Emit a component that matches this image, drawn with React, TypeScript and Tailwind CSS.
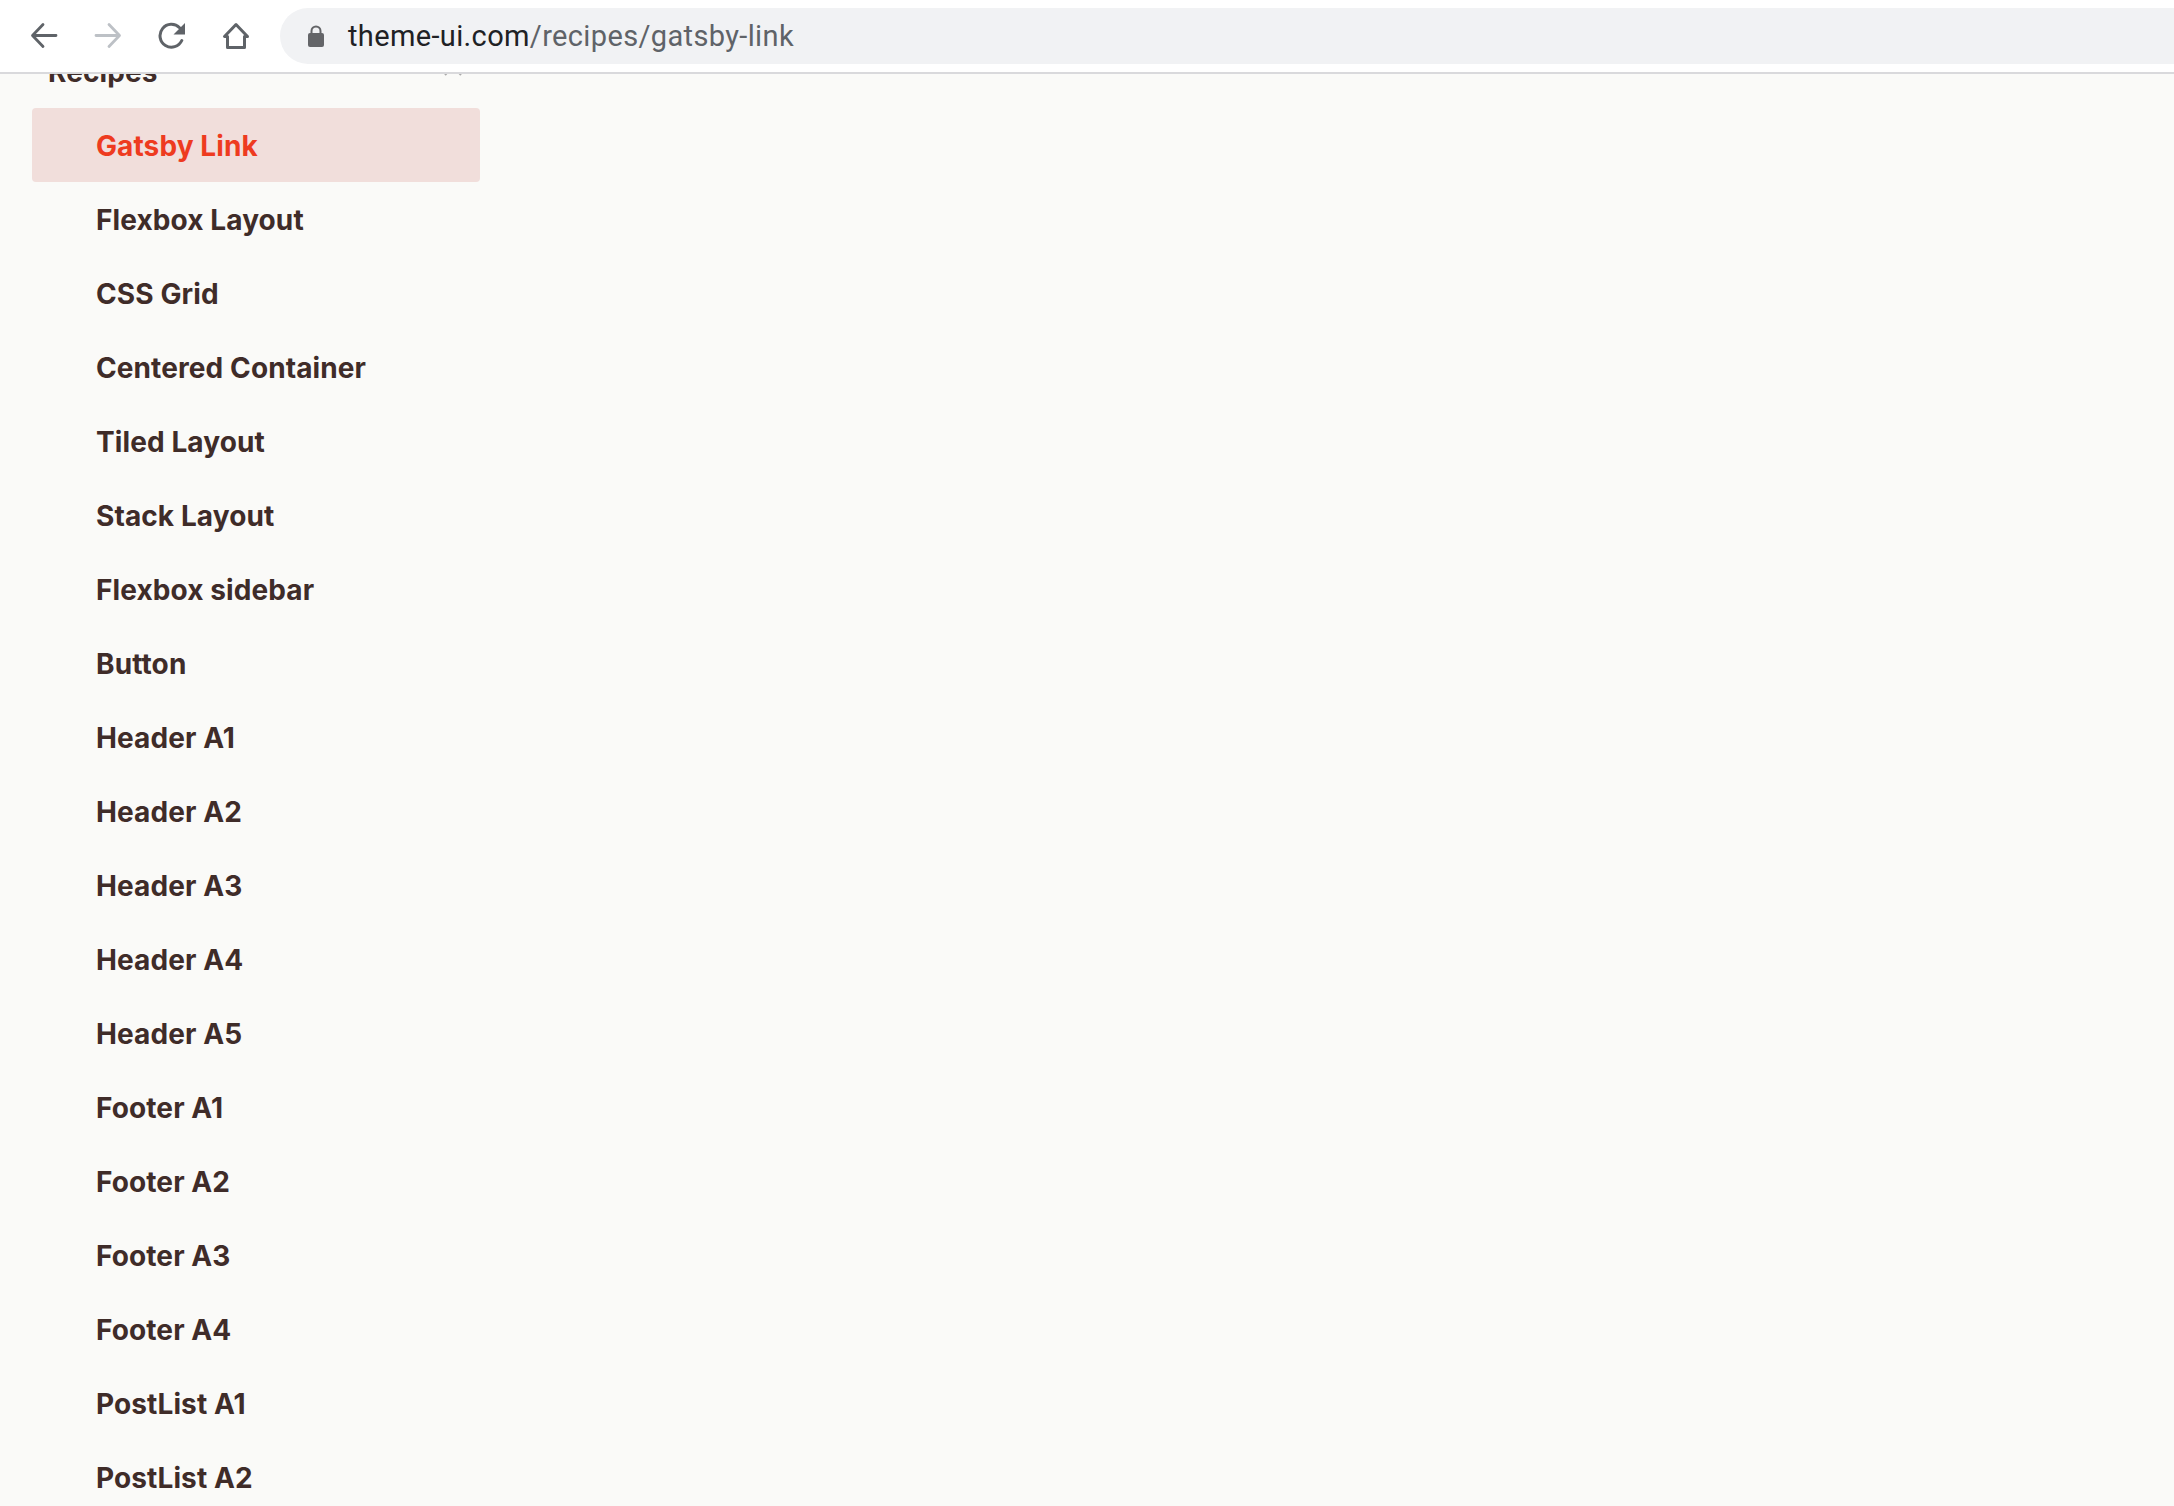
const items = ["Flexbox Layout","CSS Grid","Centered Container","Tiled Layout","Stack Layout","Flexbox sidebar","Button","Header A1","Header A2","Header A3","Header A4","Header A5","Footer A1","Footer A2","Footer A3","Footer A4","PostList A1","PostList A2"];

export default function App() {
  return (
    <div className="h-[1506px] w-full overflow-hidden bg-[#fafaf8] font-['Inter',sans-serif]">
      <header className="relative z-10 flex h-[74px] items-start border-b-2 border-[#d9d9dc] bg-white">
        <div className="flex h-[72px] w-[280px] shrink-0 items-center">
          <svg className="ml-[30px] h-[28px] w-[28px]" viewBox="0 0 28 28" fill="none" stroke="#5f6368" strokeWidth="2.8" strokeLinecap="round" strokeLinejoin="round"><path d="M26 13.5H3M13 2.5L2.5 13.5L13 24.5" /></svg>
          <svg className="ml-[36px] h-[28px] w-[28px]" viewBox="0 0 28 28" fill="none" stroke="#bdc1c6" strokeWidth="2.8" strokeLinecap="round" strokeLinejoin="round"><path d="M2 13.5H25M15 2.5L25.5 13.5L15 24.5" /></svg>
          <svg className="ml-[36px] h-[28px] w-[28px]" viewBox="0 0 28 28" fill="none"><path d="M23.8 18.5A11.4 11.4 0 1 1 21.6 5.8" stroke="#5f6368" strokeWidth="3" strokeLinecap="round" /><path d="M27 1v11.5H15.5z" fill="#5f6368" /></svg>
          <svg className="ml-[36px] h-[28px] w-[28px]" viewBox="0 0 28 28" fill="none" stroke="#5f6368" strokeWidth="3" strokeLinecap="round" strokeLinejoin="round"><path d="M14 2.5L2.5 14.5H5.5V25.5H22.5V14.5H25.5Z" /></svg>
        </div>
        <div className="mt-2 flex h-14 grow items-center rounded-l-[28px] bg-[#f1f2f4]">
          <svg className="ml-[28px] h-[22px] w-4 shrink-0" viewBox="0 0 16 22"><path d="M3.5 8V6a4.5 4.5 0 0 1 9 0v2" fill="none" stroke="#646568" strokeWidth="2" /><rect x="0" y="8" width="16" height="14" rx="2" fill="#646568" /></svg>
          <div className="ml-[24px] pt-[1px] text-[29px] leading-none tracking-[0.36px] text-[#202124] font-['Roboto',sans-serif]">theme-ui.com<span className="text-[#5f6368]">/recipes/gatsby-link</span></div>
        </div>
      </header>
      <aside className="-mt-[40px] w-[512px] px-8 tracking-[0.1px]">
        <div className="relative flex h-[74px] items-center pl-4 pt-[2px] text-[28px] font-bold text-[#3f2c29]">
          Recipes
          <svg className="absolute right-[15px] top-[20px] h-6 w-6" viewBox="0 0 24 24" fill="none" stroke="#aaaaaa" strokeWidth="2"><path d="M4 21L12 12L20 21" /></svg>
        </div>
        <a className="flex h-[74px] items-center rounded bg-[#f1dedb] pl-16 pt-[2px] text-[28px] font-bold text-[#ee3b1f]">Gatsby Link</a>
        {items.map((t) => (
          <a key={t} className="flex h-[74px] items-center pl-16 pt-[2px] text-[28px] font-bold text-[#3f2c29]">{t}</a>
        ))}
      </aside>
    </div>
  );
}
